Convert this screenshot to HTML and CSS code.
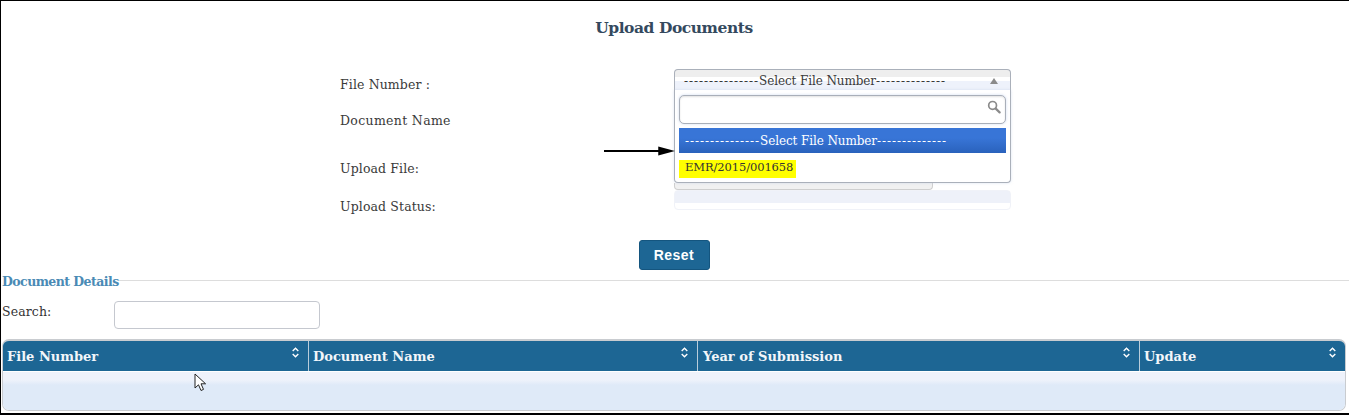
FILE: index.html
```html
<!DOCTYPE html>
<html lang="en">
<head>
<meta charset="utf-8">
<title>Upload Documents</title>
<link rel="stylesheet" href="styles.css">
</head>
<body>
<main class="frame">
  <h1 class="title">Upload Documents</h1>
  <section class="form">
    <div class="labels">
      <div class="label l1">File Number :</div>
      <div class="label l2">Document Name</div>
      <div class="label l3">Upload File:</div>
      <div class="label l4">Upload Status:</div>
    </div>
    <div class="controls">
      <div class="select-shell">
        <div class="select-head">
          <span><span class="dash">---------------</span>Select File Number<span class="dash">--------------</span></span>
          <span class="caret"></span>
        </div>
      </div>
      <div class="file-stub"></div>
      <div class="status-box"></div>
      <div class="dropdown">
        <div class="search-wrap">
          <svg class="lens" viewBox="0 0 14 14" width="14" height="14" aria-hidden="true">
            <circle cx="5.6" cy="5.4" r="3.9" fill="none" stroke="#8b8b8b" stroke-width="1.7"/>
            <path d="M8.5 8.4 12.6 12.4" stroke="#8b8b8b" stroke-width="2.2" stroke-linecap="round"/>
          </svg>
        </div>
        <div class="option active"><span class="dash">---------------</span>Select File Number<span class="dash">--------------</span></div>
        <div class="option-row"><span class="mark">EMR/2015/001658</span></div>
      </div>
      <svg class="arrow" viewBox="0 0 72 12" width="71" height="12" aria-hidden="true">
        <path d="M0 6H58" stroke="#000" stroke-width="2"/>
        <path d="M55 1.500 72 6 55 10.500Z" fill="#000"/>
      </svg>
    </div>
  </section>
  <div class="actions"><button class="reset" type="button">Reset</button></div>
  <section class="details">
    <div class="legend-row"><h2 class="legend">Document Details</h2><span class="rule"></span></div>
    <div class="search-row">
      <span class="search-label">Search:</span>
      <span class="search-input"></span>
    </div>
    <div class="table">
      <div class="thead">
        <div class="th c1">File Number<svg class="sort" viewBox="0 0 9 13" width="9" height="13" aria-hidden="true"><path d="M1.700 5 4.500 2.200 7.300 5M1.700 8 4.500 10.800 7.300 8" fill="none" stroke="#fff" stroke-width="1.400"/></svg></div>
        <div class="th c2">Document Name<svg class="sort" viewBox="0 0 9 13" width="9" height="13" aria-hidden="true"><path d="M1.700 5 4.500 2.200 7.300 5M1.700 8 4.500 10.800 7.300 8" fill="none" stroke="#fff" stroke-width="1.400"/></svg></div>
        <div class="th c3">Year of Submission<svg class="sort" viewBox="0 0 9 13" width="9" height="13" aria-hidden="true"><path d="M1.700 5 4.500 2.200 7.300 5M1.700 8 4.500 10.800 7.300 8" fill="none" stroke="#fff" stroke-width="1.400"/></svg></div>
        <div class="th c4">Update<svg class="sort" viewBox="0 0 9 13" width="9" height="13" aria-hidden="true"><path d="M1.700 5 4.500 2.200 7.300 5M1.700 8 4.500 10.800 7.300 8" fill="none" stroke="#fff" stroke-width="1.400"/></svg></div>
      </div>
      <div class="tbody"></div>
      <svg class="cursor" viewBox="0 0 13 20" width="13" height="20" aria-hidden="true">
        <path d="M1 1V15L4.500 11.800 7 17.500 9.500 16.400 7 10.800H11.600Z" fill="#fff" stroke="#222" stroke-width="1"/>
      </svg>
    </div>
  </section>
</main>
</body>
</html>
```

FILE: styles.css
```css
* { box-sizing: border-box; }
html, body { margin: 0; padding: 0; height: 415px; overflow: hidden; background: #fff; }
body { font-family: "DejaVu Serif", "Liberation Serif", serif; font-size: 12.5px; color: #3a3a3a; }
.frame { height: 415px; border: 1px solid #000; border-bottom-width: 2px; border-right: 0; display: flex; flex-direction: column; }
.title { margin: 17px 2px 0 0; height: 20px; line-height: 20px; text-align: center; font-size: 15.500px; font-weight: 700; color: #34495e; letter-spacing: -0.45px; }
.form { display: grid; grid-template-columns: 334px 337px; margin: 31px 0 0 339px; height: 171px; }
.labels { position: relative; }
.label { height: 20px; line-height: 20px; letter-spacing: 0.12px; }
.l1 { margin-top: 6px; }
.l2 { margin-top: 16px; letter-spacing: 0.33px; }
.l3 { margin-top: 28px; }
.l4 { margin-top: 18px; }
.controls { position: relative; }
.select-shell { height: 21px; border: 1px solid #aab0ba; border-bottom: 0; border-radius: 4px 4px 0 0; background: linear-gradient(#eeeeee 0, #eeeeee 7px, #fff 7px, #fff 11px, #eef2fb 11px); }
.select-head { display: flex; justify-content: space-between; padding: 1px 12px 0 9px; height: 20px; line-height: 20px; font-size: 12px; letter-spacing: -0.1px; }
.dash { letter-spacing: 0.95px; }
.caret { width: 0; height: 0; margin-top: 7px; border: 4px solid transparent; border-top: 0; border-bottom: 6px solid #8b8b8b; }
.file-stub { margin-top: 93px; width: 259px; height: 7px; background: #f1f1f1; border: 1px solid #cfcfcf; border-top: 0; border-radius: 0 0 4px 4px; }
.status-box { height: 20px; border: 1px solid #f0f2f8; border-radius: 4px; background: linear-gradient(#eef1f9 0, #eef1f9 12px, #fff 12px); }
.dropdown { position: absolute; left: 0; top: 21px; width: 337px; height: 93px; padding: 5px 4px 0; background: #fff; border: 1px solid #aab0ba; border-top: 0; border-radius: 0 0 4px 4px; box-shadow: 0 0 3px rgba(190, 200, 225, 0.55); }
.search-wrap { position: relative; height: 29px; margin-bottom: 4px; border: 1px solid #a9afb9; border-radius: 5px; box-shadow: inset 0 1px 2px rgba(0, 0, 0, 0.12), 0 0 3px rgba(190, 205, 235, 0.7); background: #fff; }
.lens { position: absolute; right: 4px; top: 4px; }
.option { height: 25px; line-height: 27px; padding-left: 6px; font-size: 12px; letter-spacing: -0.1px; color: #fff; background: linear-gradient(#3875d7 0, #3875d7 40%, #2a62bc 100%); }
.option-row { margin-top: 7px; height: 18px; line-height: 18px; }
.mark { display: inline-block; vertical-align: top; height: 18px; line-height: 15px; padding: 0 3px 0 6px; font-size: 11.500px; letter-spacing: -0.1px; background: #ff0; color: #333; }
.arrow { position: absolute; left: -70px; top: 76px; }
.actions { display: flex; justify-content: center; padding-right: 2px; }
.reset { width: 71px; height: 30px; padding: 0; border: 1px solid #14557f; border-radius: 3px; background: #1d6694; color: #fff; font: 700 14px "Liberation Sans", Arial, sans-serif; letter-spacing: 0.45px; }
.details { margin-top: 2px; }
.legend-row { display: flex; align-items: center; height: 20px; }
.legend { margin: 0 0 0 1px; font-size: 12.500px; font-weight: 700; color: #4a8ab5; letter-spacing: -0.55px; line-height: 20px; white-space: nowrap; }
.rule { flex: 1; height: 1px; background: #ddd; margin-bottom: 4px; }
.search-row { display: flex; align-items: flex-start; margin-top: 9px; height: 29px; padding-left: 1px; }
.search-label { width: 112px; padding-top: 1px; line-height: 20px; letter-spacing: 0.1px; color: #333; }
.search-input { width: 206px; height: 28px; border: 1px solid #c5c8cf; border-radius: 4px; background: #fff; }
.table { position: relative; margin: 9px 3px 0 1px; height: 72px; border: 1px solid #c9ccd0; border-top-width: 2px; border-radius: 7px; overflow: hidden; }
.thead { display: grid; grid-template-columns: 305px 389px 442px 1fr; height: 30px; background: #1d6694; }
.th { position: relative; padding: 1px 0 0 4px; height: 30px; line-height: 30px; color: #f2f6fa; font-size: 13px; font-weight: 700; letter-spacing: 0; border-left: 1px solid #b9cddb; }
.c1 { border-left: 0; }
.c3 { padding-left: 5px; }
.sort { position: absolute; right: 8px; top: 5px; }
.tbody { height: 38px; margin-top: 1px; background: linear-gradient(#eef2fb 0, #eef2fb 8px, #dfeaf8 13px, #dfeaf8 100%); }
.cursor { position: absolute; left: 191px; top: 32px; }
```
